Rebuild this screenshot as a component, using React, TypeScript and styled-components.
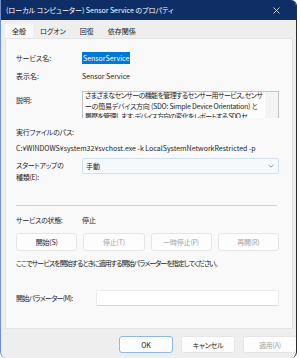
import React from "react";
import styled, { createGlobalStyle } from "styled-components";

const Global = createGlobalStyle`
  html, body { margin: 0; padding: 0; background: #ffffff; }
  * { box-sizing: border-box; }
`;

const Window = styled.div`
  width: 297px;
  height: 358px;
  display: flex;
  flex-direction: column;
  background: #eeeeee;
  border-left: 1px solid #6f8fcb;
  border-right: 1px solid #2d2d2d;
  border-radius: 0 6px 6px 6px;
  overflow: hidden;
  font-family: "Noto Sans CJK JP", "Noto Sans", sans-serif;
  font-feature-settings: "palt";
  font-size: 7px;
  color: #1c1c1c;
`;

const TitleBar = styled.div`
  height: 20px;
  flex: none;
  display: flex;
  align-items: center;
  justify-content: space-between;
  padding: 0 16px 0 5px;
  background: #0f2e66;
  color: #ffffff;
  white-space: nowrap;
`;

const Close = styled.svg`
  width: 7px;
  height: 7px;
  display: block;
`;

const TabStrip = styled.div`
  height: 18px;
  flex: none;
  display: flex;
  align-items: flex-end;
  padding-left: 4px;
`;

const Tab = styled.div<{ $active?: boolean }>`
  height: 14px;
  line-height: 14px;
  padding: 0 7px;
  background: ${(p) => (p.$active ? "#f9f9f9" : "transparent")};
  color: #1c1c1c;
  white-space: nowrap;
`;

const Panel = styled.div`
  height: 291px;
  flex: none;
  margin: 0 3px 0 4px;
  background: #f9f9f9;
  border: 1px solid #e4e4e4;
  padding: 0 13px 0 10px;
  display: flex;
  flex-direction: column;
`;

const Row = styled.div<{ $mt: number; $labelWidth?: number }>`
  margin-top: ${(p) => p.$mt}px;
  display: grid;
  grid-template-columns: ${(p) => p.$labelWidth ?? 66}px 1fr;
  align-items: start;
  line-height: 12px;
  white-space: nowrap;
`;

const Label = styled.div<{ $pt?: number; $ls?: number }>`
  padding-top: ${(p) => p.$pt ?? 0}px;
  letter-spacing: ${(p) => p.$ls ?? 0}px;
  line-height: 12px;
  color: #262626;
`;

const Line = styled.div<{ $mt: number; $color?: string; $ls?: number }>`
  margin-top: ${(p) => p.$mt}px;
  line-height: 12px;
  white-space: nowrap;
  letter-spacing: ${(p) => p.$ls ?? 0}px;
  color: ${(p) => p.$color ?? "#1c1c1c"};
`;

const Selected = styled.span`
  background: #0078d7;
  color: #ffffff;
  padding: 0 1px;
  display: inline-block;
  line-height: 12px;
`;

const TextArea = styled.div`
  height: 27px;
  border: 1px solid #c2c2c2;
  border-bottom: none;
  background: #fdfdfd;
  display: flex;
  overflow: hidden;
`;

const TextBody = styled.div`
  flex: 1;
  padding-left: 2px;
  margin-top: -2px;
  line-height: 10.5px;
  white-space: nowrap;
`;

const TextLine = styled.div<{ $ls: number }>`
  letter-spacing: ${(p) => p.$ls}px;
`;

const ScrollTrack = styled.div`
  width: 13px;
  flex: none;
  background: #f4f4f4;
`;

const Select = styled.div`
  height: 16px;
  border: 1px solid #d3e1ef;
  border-radius: 2px;
  background: #f6f9fc;
  display: flex;
  align-items: center;
  justify-content: space-between;
  padding: 0 4px 0 3px;
`;

const Chevron = styled.svg`
  width: 6px;
  height: 4px;
  display: block;
`;

const Separator = styled.div`
  margin-top: 22px;
  margin-right: 2px;
  height: 1px;
  background: #cfcfcf;
`;

const ButtonRow = styled.div`
  margin-top: 7px;
  display: grid;
  grid-template-columns: repeat(4, 1fr);
  gap: 6px;
`;

const Button = styled.div<{ $disabled?: boolean; $default?: boolean }>`
  height: 18px;
  display: flex;
  align-items: center;
  justify-content: center;
  background: #fdfdfd;
  border: 1px solid ${(p) => (p.$default ? "#8fb8e3" : "#e6e6e6")};
  border-radius: 3px;
  color: ${(p) => (p.$disabled ? "#a3a3a3" : "#1c1c1c")};
  white-space: nowrap;
  letter-spacing: -0.2px;
`;

const Input = styled.div`
  height: 16px;
  background: #ffffff;
  border: 1px solid #ececec;
  border-bottom-color: #d8d8d8;
  border-radius: 2px;
`;

const ParamRow = styled.div`
  margin-top: 21px;
  display: grid;
  grid-template-columns: 80px 1fr;
  align-items: center;
  white-space: nowrap;
`;

const Footer = styled.div`
  flex: none;
  display: grid;
  grid-template-columns: repeat(3, 54px);
  gap: 8px;
  padding: 7px 0 0 118px;
`;

const FooterButton = styled(Button)`
  height: 17px;
`;

export default function App() {
  return (
    <>
      <Global />
      <Window>
        <TitleBar>
          <span>(ローカル コンピューター) Sensor Service のプロパティ</span>
          <Close viewBox="0 0 7 7">
            <path d="M0.5 0.5 L6.5 6.5 M6.5 0.5 L0.5 6.5" stroke="#d8dbe4" strokeWidth="0.9" />
          </Close>
        </TitleBar>
        <TabStrip>
          <Tab $active>全般</Tab>
          <Tab>ログオン</Tab>
          <Tab>回復</Tab>
          <Tab>依存関係</Tab>
        </TabStrip>
        <Panel>
          <Row $mt={13}>
            <Label>サービス名:</Label>
            <div>
              <Selected>SensorService</Selected>
            </div>
          </Row>
          <Row $mt={6}>
            <Label>表示名:</Label>
            <div>Sensor Service</div>
          </Row>
          <Row $mt={9}>
            <Label $pt={3}>説明:</Label>
            <TextArea>
              <TextBody>
                <TextLine $ls={-0.6}>さまざまなセンサーの機能を管理するセンサー用サービス。センサ</TextLine>
                <TextLine $ls={-0.25}>ーの簡易デバイス方向 (SDO: Simple Device Orientation) と</TextLine>
                <TextLine $ls={-0.72}>履歴を管理します。デバイス方向の変化をレポートする SDO セ</TextLine>
              </TextBody>
              <ScrollTrack />
            </TextArea>
          </Row>
          <Line $mt={8} $color="#262626" $ls={-0.2}>実行ファイルのパス:</Line>
          <Line $mt={4}>C:¥WINDOWS¥system32¥svchost.exe -k LocalSystemNetworkRestricted -p</Line>
          <Row $mt={4}>
            <Label $pt={1} $ls={-0.3}>
              スタートアップの
              <br />
              種類(E):
            </Label>
            <Select>
              <span>手動</span>
              <Chevron viewBox="0 0 6 4">
                <path d="M0.5 0.8 L3 3.2 L5.5 0.8" fill="none" stroke="#7a7a7a" strokeWidth="0.8" />
              </Chevron>
            </Select>
          </Row>
          <Separator />
          <Row $mt={8}>
            <Label $ls={-0.3}>サービスの状態:</Label>
            <div>停止</div>
          </Row>
          <ButtonRow>
            <Button>開始(S)</Button>
            <Button $disabled>停止(T)</Button>
            <Button $disabled>一時停止(P)</Button>
            <Button $disabled>再開(R)</Button>
          </ButtonRow>
          <Line $mt={6} $ls={-0.95}>ここでサービスを開始するときに適用する開始パラメーターを指定してください。</Line>
          <ParamRow>
            <Label $ls={-0.7}>開始パラメーター(M):</Label>
            <Input />
          </ParamRow>
        </Panel>
        <Footer>
          <FooterButton $default>OK</FooterButton>
          <FooterButton>キャンセル</FooterButton>
          <FooterButton $disabled>適用(A)</FooterButton>
        </Footer>
      </Window>
    </>
  );
}
